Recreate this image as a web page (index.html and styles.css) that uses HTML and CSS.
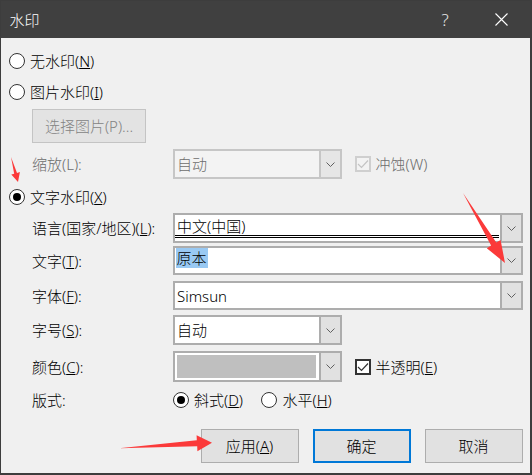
FILE: index.html
```html
<!DOCTYPE html>
<html lang="zh-CN">
<head>
<meta charset="utf-8">
<title>水印</title>
<link rel="stylesheet" href="styles.css">
</head>
<body>
<div class="window">
  <div class="titlebar">
    <span class="title">水印</span>
    <span class="help">?</span>
    <span class="close"><svg width="13" height="13" viewBox="0 0 13 13"><path d="M0.5 0.5 L12.5 12.5 M12.5 0.5 L0.5 12.5" stroke="#fff" stroke-width="1.1" fill="none"/></svg></span>
  </div>
  <div class="content">
    <div class="row r1"><span class="radio"></span><span>无水印(<u>N</u>)</span></div>
    <div class="row r2"><span class="radio"></span><span>图片水印(<u>I</u>)</span></div>
    <div class="pick-row"><span class="btn pick">选择图片(P)...</span></div>
    <div class="field f-scale">
      <span class="lbl dim">缩放(L):</span>
      <div class="combo short disabled"><span class="val dim">自动</span><span class="dd"><svg width="9" height="5" viewBox="0 0 9 5"><path d="M0.5 0.5 L4.5 4.5 L8.5 0.5" stroke="#606060" fill="none"/></svg></span></div>
      <span class="check disabled"><svg width="12" height="10" viewBox="0 0 12 10"><path d="M1 5 L4.5 8.5 L11 1.5" stroke="#c4c4c4" stroke-width="1.2" fill="none"/></svg></span>
      <span class="dim">冲蚀(W)</span>
    </div>
    <div class="row r3"><span class="radio checked"></span><span>文字水印(<u>X</u>)</span></div>
    <div class="field f-lang">
      <span class="lbl">语言(国家/地区)(<u>L</u>):</span>
      <div class="combo long"><span class="val lang">中文(中国)<span class="dbl"></span></span><span class="dd"><svg width="9" height="5" viewBox="0 0 9 5"><path d="M0.5 0.5 L4.5 4.5 L8.5 0.5" stroke="#606060" fill="none"/></svg></span></div>
    </div>
    <div class="field f-text">
      <span class="lbl">文字(<u>T</u>):</span>
      <div class="combo long"><span class="val sel-wrap"><span class="sel">原本</span></span><span class="dd"><svg width="9" height="5" viewBox="0 0 9 5"><path d="M0.5 0.5 L4.5 4.5 L8.5 0.5" stroke="#606060" fill="none"/></svg></span></div>
    </div>
    <div class="field f-font">
      <span class="lbl">字体(<u>F</u>):</span>
      <div class="combo long"><span class="val">Simsun</span><span class="dd"><svg width="9" height="5" viewBox="0 0 9 5"><path d="M0.5 0.5 L4.5 4.5 L8.5 0.5" stroke="#606060" fill="none"/></svg></span></div>
    </div>
    <div class="field f-size">
      <span class="lbl">字号(<u>S</u>):</span>
      <div class="combo short"><span class="val">自动</span><span class="dd"><svg width="9" height="5" viewBox="0 0 9 5"><path d="M0.5 0.5 L4.5 4.5 L8.5 0.5" stroke="#606060" fill="none"/></svg></span></div>
    </div>
    <div class="field f-color">
      <span class="lbl">颜色(<u>C</u>):</span>
      <div class="combo short"><span class="val swatch-wrap"><span class="swatch"></span></span><span class="dd"><svg width="9" height="5" viewBox="0 0 9 5"><path d="M0.5 0.5 L4.5 4.5 L8.5 0.5" stroke="#606060" fill="none"/></svg></span></div>
      <span class="check"><svg width="12" height="10" viewBox="0 0 12 10"><path d="M1 5 L4.5 8.5 L11 1.5" stroke="#333" stroke-width="1.2" fill="none"/></svg></span>
      <span>半透明(<u>E</u>)</span>
    </div>
    <div class="field f-layout">
      <span class="lbl">版式:</span>
      <span class="radio checked"></span><span class="opt">斜式(<u>D</u>)</span>
      <span class="radio"></span><span>水平(<u>H</u>)</span>
    </div>
  </div>
  <div class="footer">
    <span class="btn action">应用(<u>A</u>)</span>
    <span class="btn action default">确定</span>
    <span class="btn action">取消</span>
  </div>
  <svg class="annot" width="532" height="475" viewBox="0 0 532 475">
    <polygon fill="#fb3a3a" points="463,193 491.1,245.6 486.8,248.2 505,263 500.6,240.0 496.3,242.6"/>
    <polygon fill="#fb3a3a" points="119,448.3 197.2,446.3 197.4,451.3 212,442.7 196.6,435.3 196.8,440.3"/>
    <polygon fill="#fb3a3a" points="11,157 14.2,173.7 11.3,174.5 18,182 19.9,172.1 17.0,172.9"/>
  </svg>
</div>
</body>
</html>
```
FILE: styles.css
```css
body {
  margin: 0;
}

.window {
  position: relative;
  width: 532px;
  height: 475px;
  box-sizing: border-box;
  border: 1px solid #3d3d3d;
  border-width: 1px 2px 2px 1px;
  background: #f0f0f0;
  font-family: "Noto Sans", "Noto Sans CJK SC", sans-serif;
  font-size: 15px;
  font-weight: 300;
  line-height: 20px;
  color: #000;
  overflow: hidden;
  display: flex;
  flex-direction: column;
}

.titlebar {
  height: 37px;
  flex: none;
  background: #404040;
  color: #fff;
  display: flex;
  align-items: center;
  padding-left: 8.5px;
}

.title {
  flex: 1;
  font-family: "Noto Sans CJK SC", sans-serif;
  font-size: 15px;
}

.help {
  width: 56px;
  text-align: center;
  font-size: 17px;
  font-weight: 300;
  color: #e8e8e8;
}

.close {
  width: 57px;
  display: flex;
  justify-content: center;
  align-items: center;
}

.content {
  padding-left: 7.5px;
  display: flex;
  flex-direction: column;
}

.row {
  display: flex;
  align-items: center;
  height: 30px;
}

.r1 { margin-top: 8px; }
.r2 { margin-top: 1px; }
.r3 { margin-top: 3px; }

.radio {
  flex: none;
  position: relative;
  width: 16px;
  height: 16px;
  box-sizing: border-box;
  border: 1px solid #333;
  border-radius: 50%;
  background: #fff;
  margin-right: 5.5px;
}

.radio.checked::after {
  content: "";
  position: absolute;
  left: 3px;
  top: 3px;
  width: 8px;
  height: 8px;
  border-radius: 50%;
  background: #000;
}

.pick-row {
  margin-top: 2px;
  margin-left: 23.5px;
  display: flex;
}

.btn {
  box-sizing: border-box;
  display: flex;
  align-items: center;
  justify-content: center;
  background: #e1e1e1;
  border: 1px solid #adadad;
}

.pick {
  width: 114px;
  height: 34px;
  color: #838383;
  background: #e3e3e3;
  border-color: #c4c4c4;
}

.field {
  display: flex;
  align-items: center;
  margin-left: 23.5px;
  height: 30px;
}

.f-scale { margin-top: 6px; }
.f-lang { margin-top: 1px; }
.f-text { margin-top: 3px; height: 29px; }
.f-font { margin-top: 6px; height: 29px; }
.f-size { margin-top: 5px; }
.f-color { margin-top: 6px; height: 31px; }
.f-layout { margin-top: 3px; }

.lbl {
  width: 140.5px;
  flex: none;
}

.dim {
  color: #6d6d6d;
}

.combo {
  box-sizing: border-box;
  height: 100%;
  border: 2px solid #adadad;
  background: #fff;
  display: flex;
  flex: none;
}

.combo.short { width: 169px; }
.combo.long { width: 350.5px; }

.combo.disabled {
  background: #f3f3f3;
  border-color: #c6c6c6;
}

.val {
  flex: 1;
  display: flex;
  align-items: center;
  padding-left: 2.5px;
  position: relative;
}

.dd {
  width: 19px;
  flex: none;
  border-left: 2px solid #adadad;
  background: #e1e1e1;
  display: flex;
  align-items: center;
  justify-content: center;
}

.combo.disabled .dd {
  border-left-color: #c6c6c6;
  background: #e6e6e6;
}

.lang .dbl {
  position: absolute;
  left: 0.5px;
  right: 1px;
  bottom: 3px;
  height: 1px;
  border-top: 1px solid #000;
  border-bottom: 1px solid #000;
}

.lang {
  padding-bottom: 5px;
}

.sel-wrap {
  align-items: flex-start;
  padding-left: 1px;
}

.sel {
  background: #99c9f3;
  line-height: 20px;
  padding: 0 1px;
}

.swatch-wrap {
  padding: 2px 3px 2px 2px;
  align-items: stretch;
}

.swatch {
  flex: 1;
  background: #bfbfbf;
}

.check {
  flex: none;
  box-sizing: border-box;
  width: 16px;
  height: 16px;
  border: 2px solid #333;
  background: #fff;
  margin-left: 13px;
  margin-right: 5px;
  display: flex;
  align-items: center;
  justify-content: center;
}

.check.disabled {
  border-color: #cfcfcf;
  background: #f3f3f3;
}

.opt {
  margin-right: 18px;
}

.footer {
  margin-top: 14px;
  display: flex;
  justify-content: flex-end;
  gap: 14px;
  padding-right: 7.5px;
}

.action {
  width: 98px;
  height: 34px;
}

.action.default {
  border: 2px solid #0078d7;
}

.annot {
  position: absolute;
  left: -1px;
  top: -1px;
  pointer-events: none;
}
```
